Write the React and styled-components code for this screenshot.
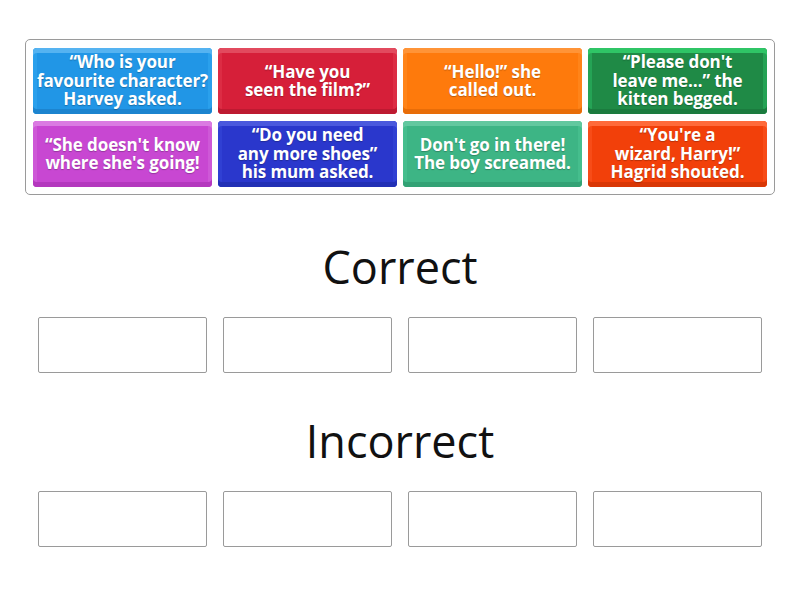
import styled, { createGlobalStyle } from "styled-components";

const GlobalStyle = createGlobalStyle`
  body {
    margin: 0;
    background: #fff;
    font-family: "Open Sans", "Liberation Sans", sans-serif;
  }
`;

const Page = styled.div`
  width: 800px;
  height: 600px;
  padding-top: 39px;
  box-sizing: border-box;
`;

const Bank = styled.div`
  margin: 0 25px;
  padding: 8px 7px 7px 7px;
  border: 1px solid #9a9a9a;
  border-radius: 5px;
  display: grid;
  grid-template-columns: repeat(4, 179px);
  grid-auto-rows: 66px;
  gap: 7px 6px;
`;

const Tile = styled.div`
  background: ${(p) => p.$bg};
  border-radius: 4px;
  box-shadow: inset 0 5px 0 ${(p) => p.$top}, inset 0 -5px 0 ${(p) => p.$bottom},
    inset 4px 0 0 ${(p) => p.$side}, inset -4px 0 0 ${(p) => p.$side};
  color: #fff;
  font-weight: 700;
  font-size: 17px;
  line-height: 18.5px;
  text-align: center;
  display: flex;
  align-items: center;
  justify-content: center;
  text-shadow: 0 1px 1px rgba(0, 0, 0, 0.25);
  white-space: pre-line;
  letter-spacing: -0.1px;
`;

const Title = styled.div`
  text-align: center;
  font-size: 45px;
  line-height: 60px;
  color: #111;
  margin-top: ${(p) => p.$mt}px;
`;

const Row = styled.div`
  display: grid;
  grid-template-columns: repeat(4, 169px);
  gap: 16px;
  margin: 20px 0 0 38px;
`;

const Slot = styled.div`
  height: 56px;
  border: 1px solid #9a9a9a;
  border-radius: 2px;
  box-sizing: border-box;
`;

const tiles = [
  { t: "\u201cWho is your\nfavourite character?\nHarvey asked.", bg: "#2196e6", top: "#55b3f1", bottom: "#1c84cf", side: "#2aa0ec" },
  { t: "\u201cHave you\nseen the film?\u201d", bg: "#d61f39", top: "#e24a5e", bottom: "#bd1a31", side: "#dc2c44" },
  { t: "\u201cHello!\u201d she\ncalled out.", bg: "#fe7a0c", top: "#ff9437", bottom: "#e86d08", side: "#ff8419" },
  { t: "\u201cPlease don't\nleave me\u2026\u201d the\nkitten begged.", bg: "#1f8a46", top: "#2fc566", bottom: "#1b7b3e", side: "#25a355" },
  { t: "\u201cShe doesn't know\nwhere she's going!", bg: "#c847d2", top: "#da7be2", bottom: "#b438be", side: "#ce58d7" },
  { t: "\u201cDo you need\nany more shoes\u201d\nhis mum asked.", bg: "#2a37cc", top: "#4a58dd", bottom: "#2230b5", side: "#3040d3" },
  { t: "Don't go in there!\nThe boy screamed.", bg: "#3db585", top: "#62c89f", bottom: "#33a275", side: "#45be8d" },
  { t: "\u201cYou're a\nwizard, Harry!\u201d\nHagrid shouted.", bg: "#f2400a", top: "#ff6a3a", bottom: "#d93706", side: "#f74c18" },
];

export default function App() {
  return (
    <Page>
      <GlobalStyle />
      <Bank>
        {tiles.map((x, i) => (
          <Tile key={i} $bg={x.bg} $top={x.top} $bottom={x.bottom} $side={x.side}>
            {x.t}
          </Tile>
        ))}
      </Bank>
      <Title $mt={42}>Correct</Title>
      <Row>
        {[0, 1, 2, 3].map((i) => (
          <Slot key={i} />
        ))}
      </Row>
      <Title $mt={38}>Incorrect</Title>
      <Row>
        {[0, 1, 2, 3].map((i) => (
          <Slot key={i} />
        ))}
      </Row>
    </Page>
  );
}
